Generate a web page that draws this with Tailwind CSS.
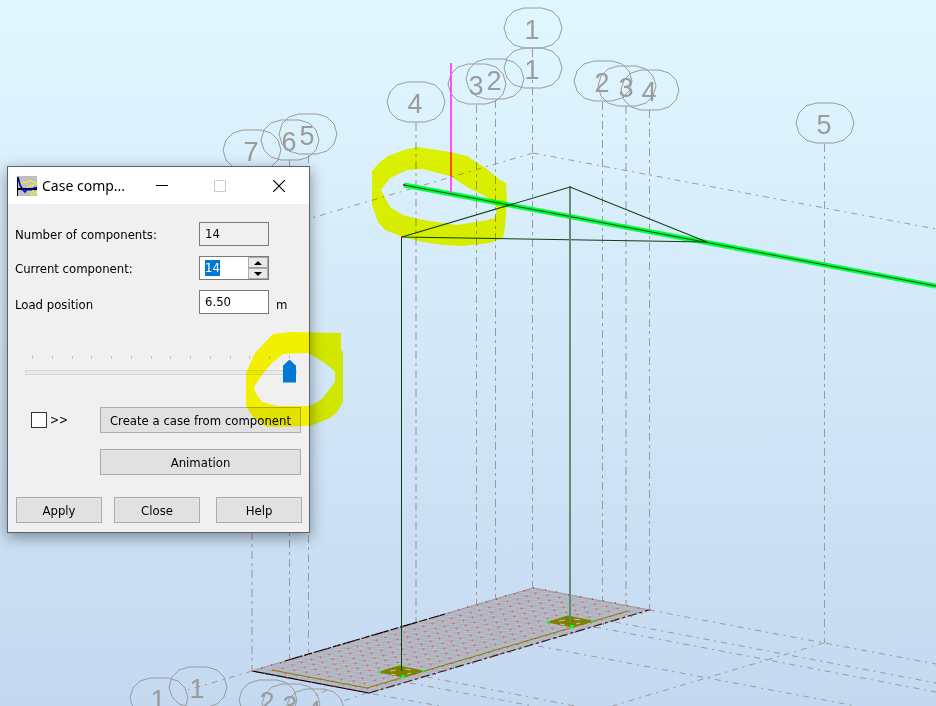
<!DOCTYPE html>
<html lang="en">
<head>
    <meta charset="UTF-8">
    <meta name="viewport" content="width=device-width, initial-scale=1.0">
    <title>Case components</title>
    <script src="https://cdn.jsdelivr.net/npm/@tailwindcss/browser@4"></script>
</head>
<body class="bg-[#c5d8f0]">
<main class="relative min-h-screen overflow-hidden bg-linear-to-b from-[#e1f7ff] to-[#c4d8f0] font-['DejaVu_Sans_Condensed','DejaVu_Sans',sans-serif] text-[13px] text-black">

    <!-- 3D view -->
    <svg class="absolute inset-0 h-full w-full" aria-label="Structure view">
        <!-- structural axes -->
        <g stroke="#9b9b9b" stroke-width="1" fill="none" stroke-dasharray="6 5 2 5">
            <g id="verticals" stroke-dasharray="8 4 3 4" shape-rendering="crispEdges"></g>
            <path d="M533 153L240 239M533 153L936 229"/>
            <path d="M649 610L936 664M615 622L936 683M595 627L936 692M538 646L856 706"/>
            <path d="M824 643L612 706M373 694L440 706M410 683L533 706M427 677L575 706"/>
            <path d="M252 671L188 690M367 693L343 701M327 690L312 697"/>
        </g>
        <g id="bubbles" stroke="#9b9b9b" fill="none"></g>

        <!-- slab with its finite element mesh -->
        <path d="M252 671L533 588L649 610L369 693Z" fill="#b9c1d0"/>
        <g id="mesh" stroke="#a9a9ad" stroke-width="1" fill="none" opacity="0.6"></g>
        <path d="M272 670L367 688L628 611" stroke="#808000" fill="none"/>
        <path d="M252 671L369 693" stroke="#000" stroke-width="1.2"/>
        <path d="M285 661L445 614" stroke="#000" stroke-width="1.2" stroke-dasharray="18 2 8 2"/>
        <path d="M252 671L285 661M445 614L533 588L649 610" stroke="#999" fill="none"/>
        <path d="M369 693L649 610" stroke="#222" stroke-width="1.2" stroke-dasharray="9 3 3 3"/>
        <g id="nodes" fill="#f23b3b" shape-rendering="crispEdges"></g>

        <!-- supports -->
        <g id="support">
            <path d="M379 672L399 666L423 671L403 677Z" fill="#808000" stroke="#808000"/>
            <path d="M390 671l6-1M405 669l6 1M391 674l5 1M407 674l4-1" stroke="#c4c6b4" fill="none"/>
            <path d="M378 671h3v2h-3zM398 665h3v1h-3zM422 670h2v2h-2zM401 675h4v3h-4z" fill="#00ff22"/>
        </g>
        <use href="#support" x="169" y="-50"/>

        <!-- frame and moving load path -->
        <path d="M404 185L936 286" stroke="#00ff40" stroke-width="5"/>
        <path d="M404 185L936 286" stroke="#064d18" stroke-width="1"/>
        <path d="M402 237L570 187L707 242Z" stroke="#0b4016" stroke-width="1.100" fill="none"/>
        <path d="M401.500 237V671" stroke="#0b4016" shape-rendering="crispEdges"/>
        <path d="M570 187V622" stroke="#5c8f74" stroke-width="2"/>
        <path d="M451 63V193" stroke="#ff4dff" stroke-width="2"/>
        <path d="M401 236h2v2h-2zM569 186h2v2h-2zM403 184h2v2h-2z" fill="#d02020"/>
    </svg>

    <!-- dialog -->
    <form role="dialog" aria-label="Case components" class="absolute left-[7px] top-[166px] w-[303px] border border-[#596368] bg-[#f0f0f0] leading-4 shadow-[0_4px_14px_rgba(0,0,0,0.4)]">
        <header class="flex h-[37px] items-center bg-white pl-[9px] font-['Noto_Sans',sans-serif] text-[14px]">
            <svg class="mr-[5px] h-5 w-5" viewBox="0 0 20 20">
                <path fill="#c0c0c0" d="M0 0h20v20H0z"/>
                <path d="M0 1h1v19H0zM0 12h20v2H0z" fill="#000"/>
                <path d="M3 9L6 6l3 1 2-2h4l2 2h3M10 12l3-3h4M12 15l3-1 2 3M13 15l1 3 2 1 4-3" stroke="#ff0" fill="none"/>
                <path d="M1 1l2 8 3 5 2 2 2-3M10 13.500l4 .5 3-2 3-.5" stroke="#0000d8" fill="none" stroke-width="1.500"/>
            </svg>
            <h1 class="grow">Case comp...</h1>
            <button type="button" aria-label="Minimize" class="mr-[46px]">
                <svg class="h-3 w-3" viewBox="0 0 12 12"><path d="M0 5.500h12" stroke="#000"/></svg>
            </button>
            <button type="button" aria-label="Maximize" class="mr-[47px]" disabled>
                <svg class="h-3 w-3" viewBox="0 0 12 12"><path d="M.5.5h11v11H.5z" stroke="#ccc" fill="none"/></svg>
            </button>
            <button type="button" aria-label="Close window" class="mr-[24px]">
                <svg class="h-3 w-3" viewBox="0 0 12 12"><path d="M0 0l12 12M12 0L0 12" stroke="#000" stroke-width="1.200"/></svg>
            </button>
        </header>

        <div class="grid grid-cols-[184px_70px_auto] items-center gap-y-[10px] pl-[7px] pt-[18px]">
            <label for="count" class="pt-[2px]">Number of components:</label>
            <input id="count" type="text" value="14" readonly class="h-6 w-full border border-[#7a7a7a] px-[5px] pb-[1px] outline-none">
            <span></span>

            <label for="current" class="pt-[2px]">Current component:</label>
            <div class="flex h-6 border border-[#7a7a7a] bg-white">
                <input id="current" type="text" value="14" class="w-0 grow px-[5px] pb-[1px] outline-none selection:bg-[#0078d7] selection:text-white">
                <div class="flex w-5 flex-col border border-[#acacac] bg-[#e9e9e9]">
                    <button type="button" aria-label="Next component" class="flex flex-1 items-center justify-center border-b border-[#9a9aa0]">
                        <svg class="h-1 w-2" viewBox="0 0 8 4"><path d="M0 4L4 0l4 4z"/></svg>
                    </button>
                    <button type="button" aria-label="Previous component" class="flex flex-1 items-center justify-center border-t border-[#acacac]">
                        <svg class="h-1 w-2" viewBox="0 0 8 4"><path d="M0 0l4 4 4-4z"/></svg>
                    </button>
                </div>
            </div>
            <span></span>

            <label for="position" class="pt-[6px]">Load position</label>
            <input id="position" type="text" value="6.50" class="h-6 w-full border border-[#7a7a7a] bg-white px-[5px] pb-[1px] outline-none">
            <span class="pl-[7px] pt-[6px]">m</span>
        </div>

        <div class="ml-[17px] mr-[12px] mt-[41px]">
            <div id="ticks" class="flex h-[4px] justify-between px-[7px]"></div>
            <input type="range" min="1" max="14" value="14" aria-label="Component" class="mt-[1px] block h-6 w-full appearance-none bg-transparent [&::-webkit-slider-runnable-track]:h-[5px] [&::-webkit-slider-runnable-track]:border [&::-webkit-slider-runnable-track]:border-[#d6d6d6] [&::-webkit-slider-runnable-track]:bg-[#e7eaea] [&::-webkit-slider-thumb]:mt-[-11px] [&::-webkit-slider-thumb]:h-[23px] [&::-webkit-slider-thumb]:w-[13px] [&::-webkit-slider-thumb]:appearance-none [&::-webkit-slider-thumb]:bg-[#0078d7] [&::-webkit-slider-thumb]:[clip-path:polygon(50%_0,100%_27%,100%_100%,0_100%,0_27%)]">
        </div>

        <div class="mt-[23px] grid grid-cols-[92px_201px] items-center gap-y-4">
            <label class="flex items-center gap-[3px] pl-[23px]">
                <input type="checkbox" class="h-4 w-4 appearance-none border border-[#333] bg-white checked:bg-[#0078d7]">
                <span class="text-[12px]">&gt;&gt;</span>
            </label>
            <button type="button" class="h-[26px] border border-[#adadad] bg-[#e1e1e1] pt-[2px]">Create a case from component</button>
            <button type="button" class="col-start-2 h-[26px] border border-[#adadad] bg-[#e1e1e1] pt-[2px]">Animation</button>
        </div>

        <div class="mt-[22px] grid grid-cols-[98px_102px_86px] pb-[9px] pl-[8px]">
            <button type="button" class="h-[26px] w-[86px] border border-[#adadad] bg-[#e1e1e1] pt-[2px]">Apply</button>
            <button type="button" class="h-[26px] w-[86px] border border-[#adadad] bg-[#e1e1e1] pt-[2px]">Close</button>
            <button type="button" class="h-[26px] w-[86px] border border-[#adadad] bg-[#e1e1e1] pt-[2px]">Help</button>
        </div>
    </form>

    <!-- highlighter marks -->
    <svg class="pointer-events-none absolute inset-0 h-full w-full mix-blend-multiply" fill="#ffff00" fill-rule="evenodd">
        <path d="M372 171L380 162L388 156L407 149L418 147L450 152L467 156L487 169L500 180L506 183L507 200L505 227L503 238L490 243L463 246L443 245L423 242L403 237L385 230L378 222L372 205Z M381 190L390 178L407 170L423 169L450 176L467 187L487 197L497 207L495 218L483 221L457 225L423 220L403 215L390 207Z"/>
        <path d="M273 334L290 332L341 333L341 350L343 352L343 402L337 412L330 418L310 426L267 427L253 417L246 406L246 373L255 353Z M254 387L262 375L272 363L283 354L308 353L325 363L335 372L335 382L322 399L310 406L277 406L262 402L255 392Z"/>
    </svg>
</main>

<script>
    const NS = 'http://www.w3.org/2000/svg';
    const add = (parentId, tag, attrs, text) => {
        const el = document.createElementNS(NS, tag);
        for (const key in attrs) el.setAttribute(key, attrs[key]);
        if (text) el.textContent = text;
        document.getElementById(parentId).appendChild(el);
    };

    // axis lines: x, top, bottom, width
    [
        [252, 171, 671, 2], [289, 160, 660, 1], [308, 155, 654, 1], [416, 123, 623, 2],
        [476, 105, 605, 1], [495, 100, 600, 1], [532, 49, 588, 1], [602, 102, 601, 1],
        [626, 106, 606, 2], [649, 110, 610, 1], [824, 144, 643, 1]
    ].forEach(([x, y1, y2, w]) => add('verticals', 'path', {
        d: `M${w === 1 ? x + 0.5 : x} ${y1}V${y2}`, 'stroke-width': w, opacity: w === 2 ? 0.55 : 1
    }));

    // axis bubbles: label, centre x, centre y
    [
        ['1', 533, 28], ['1', 533, 68], ['4', 416, 102], ['3', 477, 84], ['2', 495, 79],
        ['2', 603, 81], ['3', 627, 86], ['4', 650, 90], ['5', 825, 123], ['7', 252, 150],
        ['6', 290, 140], ['5', 308, 134], ['1', 159, 698], ['1', 198, 687], ['2', 268, 700],
        ['3', 291, 704], ['4', 315, 709]
    ].forEach(([label, x, y]) => {
        add('bubbles', 'path', {
            d: `M${x - 9} ${y - 20}h18l10 3l7 7l3 10l-3 10l-7 7l-10 3h-18l-10-3l-7-7l-3-10l3-10l7-7z`
        });
        add('bubbles', 'text', {
            x: x - 1, y: y + 11, 'text-anchor': 'middle', fill: '#9b9b9b', stroke: 'none',
            'font-family': 'Liberation Sans, sans-serif', 'font-size': 27
        }, label);
    });

    // slab mesh: 30 x 10 cells
    const at = (i, j) => [252 + 281 * i / 30 + 117 * j / 10, 671 - 83 * i / 30 + 22 * j / 10];
    let d = '';
    for (let i = 0; i <= 30; i++) d += `M${at(i, 0)}L${at(i, 10)}`;
    for (let j = 0; j <= 10; j++) d += `M${at(0, j)}L${at(30, j)}`;
    for (let i = 0; i < 30; i++) for (let j = 0; j < 10; j++) d += `M${at(i, j)}L${at(i + 1, j + 1)}`;
    add('mesh', 'path', { d });
    for (let i = 0; i <= 30; i++) {
        for (let j = 0; j <= 10; j++) {
            const [x, y] = at(i, j).map(Math.round);
            const edge = i === 0 || j === 0 || i === 30 || j === 10;
            add('nodes', 'path', {
                d: edge ? `M${x} ${y - 1}h1v2h-1z` : `M${x - 1} ${y}h3v1h-3zM${x} ${y - 1}h1v3h-1z`,
                opacity: edge ? 0.9 : 0.4
            });
        }
    }

    const ticks = document.getElementById('ticks');
    for (let i = 0; i < 14; i++) {
        const tick = document.createElement('span');
        tick.className = i === 0 || i === 13 ? 'h-[4px] w-px bg-[#c4c4c4]' : 'mt-[1px] h-[3px] w-px bg-[#c4c4c4]';
        ticks.appendChild(tick);
    }

    const current = document.getElementById('current');
    current.focus();
    current.select();
</script>
</body>
</html>
